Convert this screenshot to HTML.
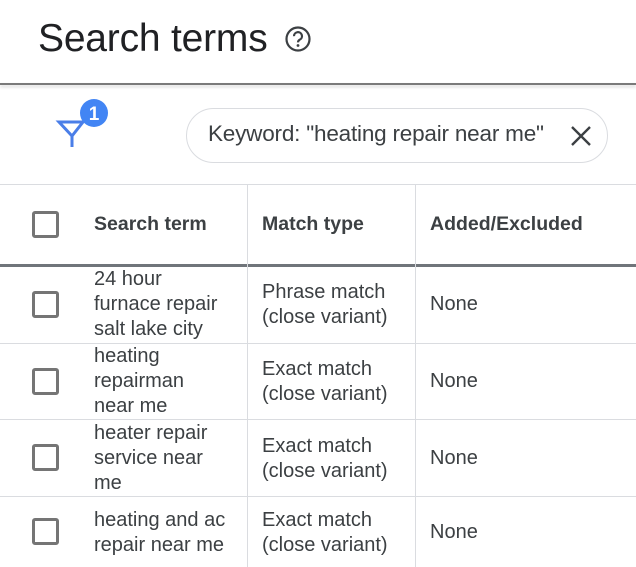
<!DOCTYPE html>
<html><head><meta charset="utf-8"><style>
*{margin:0;padding:0;box-sizing:border-box}
body{width:636px;height:567px;overflow:hidden;background:#fff;font-family:"Liberation Sans",Roboto,sans-serif;color:#3c4043;position:relative}
.a{position:absolute}
.title{left:38px;top:17px;font-size:39px;color:#202124;letter-spacing:-0.2px}
.hdr{left:0;top:83px;width:636px;height:2px;background:#7a7a7a;box-shadow:0 2px 3px rgba(0,0,0,.18)}
.chip{left:186px;top:108px;width:422px;height:55px;border:1px solid #dadce0;border-radius:28px}
.chiptext{left:208px;top:121px;font-size:22.5px;color:#3c4043;letter-spacing:-0.2px}
.hl{left:0;width:636px;height:1px;background:#dadce0}
.vl{width:1px;background:#dadce0;top:184px;height:383px}
.cb{width:27px;height:27px;border:3px solid #757575;border-radius:3px;left:32px}
.th{font-size:19.5px;font-weight:bold;color:#3c4043;top:213px}
.td{font-size:20px;line-height:25px;color:#3c4043}
</style></head><body>
<div class="a title">Search terms</div>
<svg class="a" style="left:284px;top:25px" width="28" height="28" viewBox="0 0 28 28"><circle cx="14" cy="14" r="11.5" fill="none" stroke="#3c4043" stroke-width="2.2"/><path d="M10 11.2a4 4 0 1 1 5.6 3.6c-1.1.6-1.6 1.2-1.6 2.6" fill="none" stroke="#3c4043" stroke-width="2.2"/><circle cx="14" cy="20.5" r="1.4" fill="#3c4043"/></svg>
<div class="a hdr"></div>
<svg class="a" style="left:55px;top:98px" width="56" height="52" viewBox="0 0 56 52"><path d="M4 24 H28 L17 38 Z" fill="none" stroke="#4a7ee8" stroke-width="3" stroke-linejoin="miter"/><path d="M17 37 V49" stroke="#4a7ee8" stroke-width="3"/><circle cx="39" cy="15" r="14" fill="#4285f4"/><text x="39" y="22" font-size="19" font-weight="bold" fill="#fff" text-anchor="middle" font-family="Liberation Sans">1</text></svg>
<div class="a chip"></div>
<div class="a chiptext">Keyword: "heating repair near me"</div>
<svg class="a" style="left:570px;top:125px" width="22" height="22" viewBox="0 0 22 22"><path d="M2 2L20 20M20 2L2 20" stroke="#3c4043" stroke-width="2.4"/></svg>
<div class="a hl" style="top:184px"></div>
<div class="a" style="left:0;top:264px;width:636px;height:3px;background:#70757a"></div>
<div class="a hl" style="top:343px"></div>
<div class="a hl" style="top:419px"></div>
<div class="a hl" style="top:496px"></div>
<div class="a vl" style="left:247px"></div>
<div class="a vl" style="left:415px"></div>
<div class="a cb" style="top:211px"></div>
<div class="a th" style="left:94px">Search term</div>
<div class="a th" style="left:262px">Match type</div>
<div class="a th" style="left:430px">Added/Excluded</div>

<div class="a cb" style="top:291px"></div>
<div class="a td" style="left:94px;top:267px">24 hour<br>furnace repair<br>salt lake city</div>
<div class="a td" style="left:262px;top:280px">Phrase match<br>(close variant)</div>
<div class="a td" style="left:430px;top:292px">None</div>

<div class="a cb" style="top:368px"></div>
<div class="a td" style="left:94px;top:344px">heating<br>repairman<br>near me</div>
<div class="a td" style="left:262px;top:357px">Exact match<br>(close variant)</div>
<div class="a td" style="left:430px;top:369px">None</div>

<div class="a cb" style="top:444px"></div>
<div class="a td" style="left:94px;top:421px">heater repair<br>service near<br>me</div>
<div class="a td" style="left:262px;top:434px">Exact match<br>(close variant)</div>
<div class="a td" style="left:430px;top:446px">None</div>

<div class="a cb" style="top:518px"></div>
<div class="a td" style="left:94px;top:508px">heating and ac<br>repair near me</div>
<div class="a td" style="left:262px;top:508px">Exact match<br>(close variant)</div>
<div class="a td" style="left:430px;top:520px">None</div>
</body></html>
